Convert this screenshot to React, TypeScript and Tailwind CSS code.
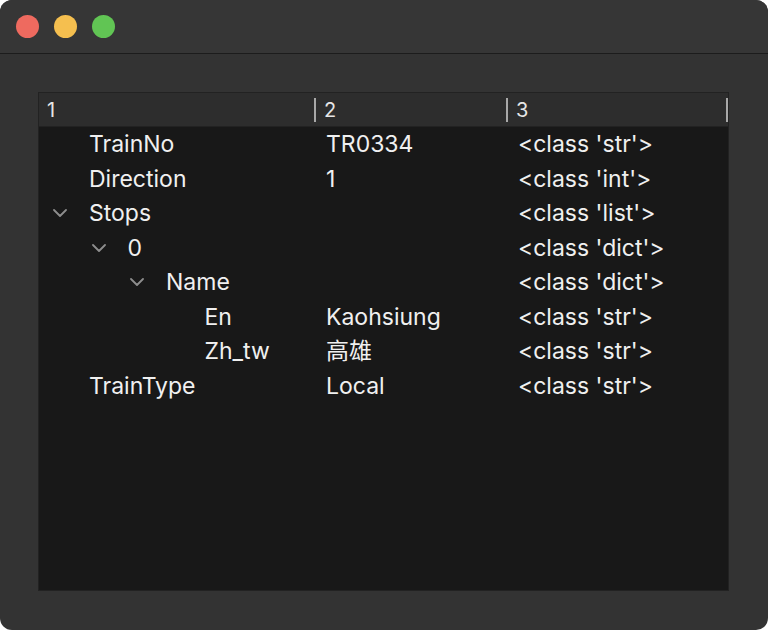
import React from "react";

type Row = {
  key: string;
  value?: string;
  type: string;
  level: number;
  open?: boolean;
};

const rows: Row[] = [
  { key: "TrainNo", value: "TR0334", type: "<class 'str'>", level: 0 },
  { key: "Direction", value: "1", type: "<class 'int'>", level: 0 },
  { key: "Stops", type: "<class 'list'>", level: 0, open: true },
  { key: "0", type: "<class 'dict'>", level: 1, open: true },
  { key: "Name", type: "<class 'dict'>", level: 2, open: true },
  { key: "En", value: "Kaohsiung", type: "<class 'str'>", level: 3 },
  { key: "Zh_tw", value: "高雄", type: "<class 'str'>", level: 3 },
  { key: "TrainType", value: "Local", type: "<class 'str'>", level: 0 },
];

const font = {
  fontFamily: '"Inter", "Noto Sans CJK TC", sans-serif',
};

function Chevron() {
  return (
    <svg width="14" height="8" viewBox="0 0 14 8" className="shrink-0">
      <path d="M1 1 L7 7 L13 1" fill="none" stroke="#8d8d8d" strokeWidth="1.8" strokeLinecap="round" strokeLinejoin="round" />
    </svg>
  );
}

function HeaderCell({ label, width }: { label: string; width: string }) {
  return (
    <div className={`${width} flex items-center h-full`}>
      <span className="pl-[8px] text-[20px] text-[#e6e6e6] flex-1">{label}</span>
      <div className="w-[2px] h-[24px] bg-[#a8a8a8]" />
    </div>
  );
}

export default function App() {
  return (
    <div className="w-[768px] h-[630px] bg-white" style={font}>
      <div className="w-full h-full rounded-[12px] bg-[#333333] flex flex-col overflow-hidden">
        {/* title bar */}
        <div className="h-[54px] shrink-0 flex items-center pl-[16px] gap-[15px] border-b border-[#1c1c1c] bg-[#363636]">
          <div className="w-[23px] h-[23px] rounded-full bg-[#ee6a5f]" />
          <div className="w-[23px] h-[23px] rounded-full bg-[#f5bf4f]" />
          <div className="w-[23px] h-[23px] rounded-full bg-[#61c554]" />
        </div>

        <div className="flex-1 pl-[38px] pr-[39px] pt-[38px] pb-[39px] flex">
          <div className="flex-1 flex flex-col border border-[#222222] bg-[#181818]">
            {/* header */}
            <div className="h-[34px] shrink-0 flex bg-[#2d2d2d] border-b border-[#222222]">
              <HeaderCell label="1" width="w-[277px]" />
              <HeaderCell label="2" width="w-[192px]" />
              <HeaderCell label="3" width="w-[220px]" />
            </div>

            {/* rows */}
            <div className="flex flex-col text-[23px] text-[#f0f0f0]">
              {rows.map((r, i) => (
                <div key={i} className="h-[34.5px] flex items-center">
                  <div className="w-[277px] flex items-center" style={{ paddingLeft: 8 + r.level * 38.5 }}>
                    <div className="w-[42px] flex justify-start pl-[6px]">
                      {r.open ? <Chevron /> : null}
                    </div>
                    <span>{r.key}</span>
                  </div>
                  <div className="w-[192px] pl-[10px]">{r.value}</div>
                  <div className="w-[218px] pl-[10px]">{r.type}</div>
                </div>
              ))}
            </div>
          </div>
        </div>
      </div>
    </div>
  );
}
